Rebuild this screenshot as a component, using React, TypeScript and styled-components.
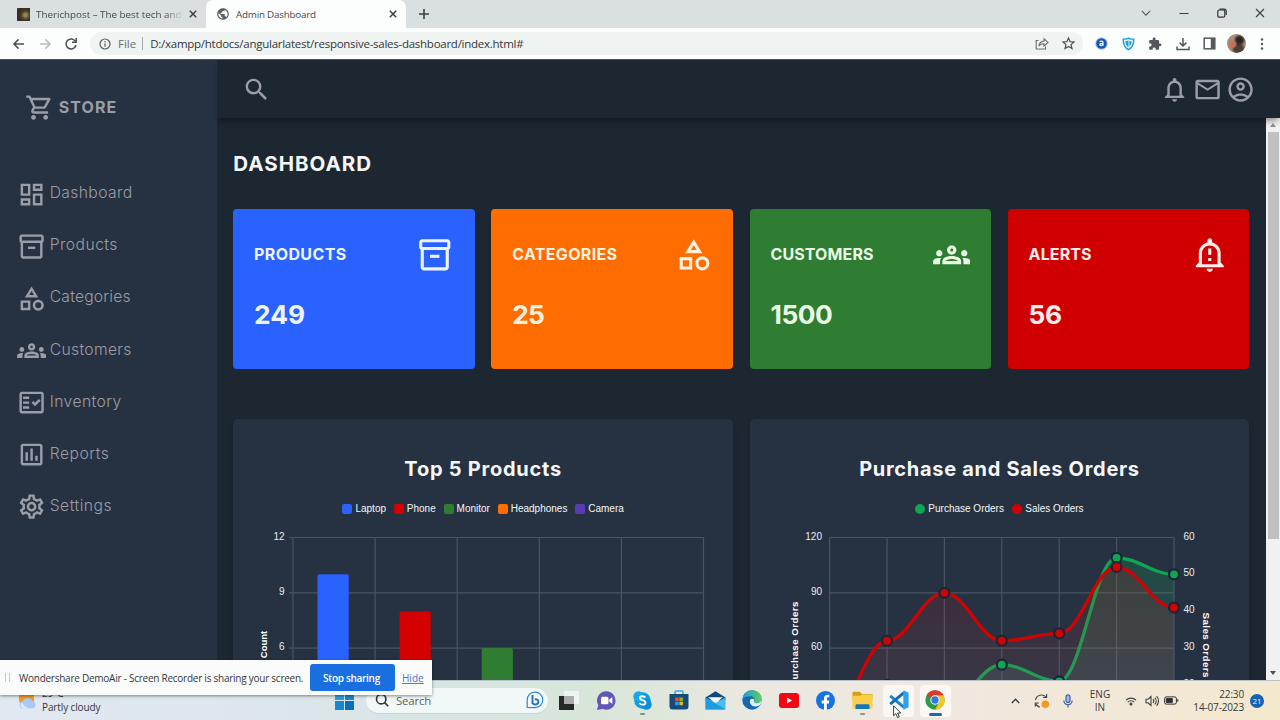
import React from "react";
import styled, { createGlobalStyle, css } from "styled-components";
import {
  MdOutlineShoppingCart,
  MdOutlineDashboard,
  MdOutlineInventory2,
  MdOutlineCategory,
  MdOutlineGroups,
  MdOutlineFactCheck,
  MdOutlinePoll,
  MdOutlineSettings,
  MdSearch,
  MdOutlineNotifications,
  MdOutlineEmail,
  MdOutlineAccountCircle,
  MdOutlineNotificationImportant,
  MdExtension,
  MdPublic,
} from "react-icons/md";

const GlobalStyle = createGlobalStyle`
  * { box-sizing: border-box; }
  body { margin: 0; overflow: hidden; background: #1d2731; }
  svg { display: block; flex: none; }
`;

const ui = `"Open Sans", "Noto Sans", sans-serif`;
const brand = `Inter, "Open Sans", sans-serif`;

const Screen = styled.div`
  position: relative;
  width: 1280px;
  height: 720px;
  display: flex;
  flex-direction: column;
  overflow: hidden;
`;

/* ---------- browser chrome ---------- */

const TabStrip = styled.div`
  height: 28px;
  flex: none;
  display: flex;
  align-items: center;
  background: #dadfe2;
  font-family: ${ui};
  font-size: 9.8px;
  color: #45494d;
`;

const Tab = styled.div<{ $active?: boolean; $width: number }>`
  width: ${(p) => p.$width}px;
  height: 28px;
  display: flex;
  align-items: center;
  gap: 6px;
  padding: 0 9px 0 ${(p) => (p.$active ? 10 : 17)}px;
  ${(p) =>
    p.$active &&
    css`
      background: #fcfdfd;
      border-radius: 7px 7px 0 0;
    `}
`;

const TabLabel = styled.span<{ $fade?: boolean; $spacing: number }>`
  flex: 1;
  overflow: hidden;
  white-space: nowrap;
  letter-spacing: ${(p) => p.$spacing}px;
  ${(p) =>
    p.$fade &&
    css`
      mask-image: linear-gradient(90deg, #000 88%, transparent);
    `}
`;

const Favicon = styled.span`
  width: 13px;
  height: 13px;
  flex: none;
  background: radial-gradient(circle at 65% 55%, #8c8a52 0 12%, #4a3a28 40%, #2f2a20 75%, #6b4b2c);
`;

const Avatar = styled.span`
  width: 19px;
  height: 19px;
  margin: 0 -3px;
  border-radius: 50%;
  background:
    radial-gradient(circle at 30% 55%, #c9705c 0 14%, transparent 26%),
    radial-gradient(circle at 66% 32%, #2a2523 0 16%, transparent 34%),
    radial-gradient(circle at 60% 78%, #4b4038 0 22%, transparent 38%), #a58d74;
`;

const NewTab = styled.div`
  padding-left: 12px;
`;

const WindowButtons = styled.div`
  margin-left: auto;
  padding-right: 15px;
  display: flex;
  align-items: center;
  gap: 28px;
  margin-top: -3px;
`;

const Toolbar = styled.div`
  height: 32px;
  flex: none;
  display: flex;
  align-items: center;
  background: #fcfdfd;
  padding: 0 12px;
  border-bottom: 1px solid #4b5460;
  font-family: ${ui};
`;

const NavButtons = styled.div`
  display: flex;
  align-items: center;
  gap: 12px;
  width: 78px;
`;

const Omnibox = styled.div`
  width: 993px;
  height: 23px;
  border-radius: 12px;
  background: #eff3f2;
  display: flex;
  align-items: center;
  padding: 0 8px 0 9px;
  font-size: 11.5px;
  color: #34383b;
`;

const Scheme = styled.span`
  margin-left: 7px;
  padding-right: 6px;
  margin-right: 7px;
  border-right: 1px solid #a5a9ab;
  line-height: 13px;
  color: #686c70;
`;

const Url = styled.span`
  flex: 1;
  white-space: nowrap;
  letter-spacing: -0.26px;
`;

const OmniActions = styled.div`
  display: flex;
  gap: 13px;
`;

const Extensions = styled.div`
  flex: 1;
  display: flex;
  align-items: center;
  justify-content: space-between;
  padding-left: 12px;
`;

/* ---------- dashboard page ---------- */

const Page = styled.div`
  height: 620px;
  flex: none;
  display: flex;
  background: #1d2731;
  font-family: ${brand};
`;

const Sidebar = styled.aside`
  width: 217px;
  flex: none;
  background: #263141;
  color: #9a9ea7;
`;

const Brand = styled.div`
  display: flex;
  align-items: center;
  gap: 5px;
  padding: 33px 0 0 24.5px;
  font-size: 16px;
  font-weight: 700;
  letter-spacing: 1.1px;
`;

const BrandName = styled.span`
  margin-top: -2px;
`;

const Menu = styled.nav`
  padding: 46px 0 0 16.5px;
`;

const MenuItem = styled.div`
  height: 52.1px;
  display: flex;
  align-items: center;
  gap: 4px;
  font-size: 15.7px;
  font-weight: 300;
`;

const MenuLabel = styled.span<{ $spacing: number }>`
  letter-spacing: ${(p) => p.$spacing}px;
  margin-top: -3px;
`;

const Content = styled.div`
  flex: 1;
  display: flex;
  flex-direction: column;
  min-width: 0;
`;

const Header = styled.header`
  height: 58px;
  flex: none;
  display: flex;
  align-items: center;
  justify-content: space-between;
  padding: 1px 25px 0 24.500px;
  color: #9a9ea7;
  background: #1d2731;
  box-shadow: 0 5px 6px -2px rgba(0, 0, 0, 0.4);
  z-index: 1;
`;

const HeaderIcons = styled.div`
  display: flex;
  gap: 3.6px;
`;

const Scroller = styled.div`
  flex: 1;
  min-height: 0;
  display: flex;
`;

const Main = styled.main`
  flex: 1;
  overflow: hidden;
  padding: 0 16.7px 0 16.3px;
  color: #f5f7f9;
`;

const Title = styled.h2`
  margin: 33.5px 0 33px;
  font-size: 20.5px;
  line-height: 24px;
  font-weight: 700;
  letter-spacing: 1px;
`;

const Cards = styled.section`
  display: grid;
  grid-template-columns: repeat(4, 1fr);
  gap: 16.7px;
`;

const Card = styled.article<{ $color: string; $ink: string }>`
  height: 160.5px;
  padding: 27px 20.8px 0 20.8px;
  border-radius: 4px;
  background: ${(p) => p.$color};
  color: ${(p) => p.$ink};
`;

const CardTop = styled.div`
  display: flex;
  align-items: center;
  justify-content: space-between;
`;

const CardName = styled.h3<{ $spacing: number }>`
  margin: 0;
  font-size: 16px;
  font-weight: 700;
  letter-spacing: ${(p) => p.$spacing}px;
`;

const CardValue = styled.div<{ $spacing: number }>`
  margin-top: 25.5px;
  font-size: 26.3px;
  line-height: 32px;
  font-weight: 700;
  letter-spacing: ${(p) => p.$spacing}px;
`;

const Charts = styled.section`
  margin-top: 50px;
  display: grid;
  grid-template-columns: repeat(2, 1fr);
  gap: 16.7px;
`;

const ChartCard = styled.article`
  height: 400px;
  border-radius: 5px;
  background: #263141;
  box-shadow: 0 4px 6px rgba(0, 0, 0, 0.12);
`;

const ChartTitle = styled.h2<{ $spacing: number }>`
  margin: 37px 0 0;
  text-align: center;
  font-size: 20px;
  line-height: 26px;
  font-weight: 700;
  letter-spacing: ${(p) => p.$spacing}px;
`;

const Legend = styled.div<{ $gap: number }>`
  margin-top: 20px;
  display: flex;
  justify-content: center;
  gap: ${(p) => p.$gap}px;
  font: 10px/14px "Liberation Sans", Arial, sans-serif;
  color: #f5f7fa;
`;

const LegendItem = styled.span`
  display: flex;
  align-items: center;
  gap: 3px;
`;

const Swatch = styled.i<{ $color: string; $round?: boolean }>`
  width: 10px;
  height: 10px;
  border-radius: ${(p) => (p.$round ? "50%" : "2px")};
  background: ${(p) => p.$color};
`;

const Plot = styled.svg`
  font-family: "Liberation Sans", Arial, sans-serif;
  font-size: 10px;
  fill: #e9edf2;
`;

const ScrollTrack = styled.div`
  width: 14px;
  display: flex;
  flex-direction: column;
  align-items: center;
  justify-content: space-between;
  background: #f1f1f2;
  padding: 5px 0;
`;

const ScrollThumb = styled.div`
  width: 11px;
  height: 407px;
  margin: 5px 0 auto;
  background: #bfc1c1;
`;

/* ---------- taskbar and sharing bar ---------- */

const Taskbar = styled.div`
  height: 40px;
  flex: none;
  display: flex;
  align-items: center;
  font-family: ${ui};
  color: #34383c;
  border-top: 1px solid #b9c2c8;
  background: linear-gradient(90deg, #e0e8f1 0%, #dbe6ea 25%, #d6e5e0 38%, #d8e6d8 47%, #e9e8e0 58%, #f0e8e0 72%, #f2e8d8 88%, #f4e8cd 100%);
`;

const Weather = styled.div`
  width: 335px;
  flex: none;
  padding: 0 0 1px 18px;
  display: flex;
  gap: 5px;
  align-items: center;
  font-size: 10px;
  line-height: 14px;
  letter-spacing: -0.12px;
`;

const SearchPill = styled.div`
  width: 182px;
  height: 26px;
  flex: none;
  margin: 0 3px 0 12px;
  border-radius: 13px;
  border-bottom: 1px solid #c9d2d2;
  background: #f1f8f7;
  display: flex;
  align-items: center;
  gap: 7px;
  padding: 0 4px 0 9px;
  font-size: 11.3px;
  color: #5a5f63;
`;

const SearchText = styled.span`
  flex: 1;
  letter-spacing: -0.1px;
`;

const Slot = styled.div<{ $lit?: boolean; $mark?: string; $wide?: boolean }>`
  width: 31px;
  height: 32px;
  flex: none;
  margin: 0 2.8px;
  display: flex;
  flex-direction: column;
  align-items: center;
  justify-content: center;
  border-radius: 4px;
  background: ${(p) => (p.$lit ? "rgba(255,255,255,.65)" : "transparent")};
  padding-top: 5px;

  &::after {
    content: "";
    width: ${(p) => (p.$wide ? 13 : 5)}px;
    height: 2.5px;
    margin-top: 3px;
    border-radius: 2px;
    background: ${(p) => p.$mark || "transparent"};
  }
`;

const Tray = styled.div`
  flex: 1;
  display: flex;
  align-items: center;
  justify-content: flex-end;
  padding-right: 16px;
  font-size: 10px;
  line-height: 13px;
`;

const TrayIcons = styled.div`
  display: flex;
  align-items: center;
  gap: 13.500px;
`;

const StatusIcons = styled.div`
  display: flex;
  align-items: center;
`;

const Lang = styled.div`
  width: 26px;
  margin: 0 12px 0 14px;
  text-align: center;
`;

const Clock = styled.div`
  width: 58px;
  margin: 0 6px 0 7px;
  text-align: right;
  white-space: nowrap;
  letter-spacing: -0.15px;
`;

const Count = styled.span`
  width: 14px;
  height: 14px;
  border-radius: 50%;
  background: #1265b4;
  color: #e8f2fb;
  font-size: 8px;
  line-height: 14px;
  text-align: center;
`;

const ShareBar = styled.div`
  position: absolute;
  left: 0;
  top: 660px;
  width: 432px;
  height: 35px;
  display: flex;
  align-items: center;
  background: #fafbfb;
  box-shadow: 0 1px 3px rgba(0, 0, 0, 0.45);
  font-family: ${ui};
  font-size: 10px;
  color: #34383c;
  white-space: nowrap;
`;

const Grip = styled.i`
  width: 5px;
  height: 9px;
  margin: 0 9px 0 5px;
  border: solid #c6c8ca;
  border-width: 0 1.5px;
`;

const ShareText = styled.span`
  width: 291px;
  letter-spacing: -0.25px;
`;

const StopButton = styled.button`
  width: 85px;
  height: 27px;
  padding: 0 2px 0 0;
  border: 0;
  border-radius: 3px;
  background: #1a6fe0;
  color: #fff;
  font: 600 10px ${ui};
  letter-spacing: -0.3px;
`;

const HideLink = styled.a`
  margin-left: 7px;
  color: #4d78cf;
  text-decoration: underline;
`;

const Cursor = styled.svg`
  position: absolute;
  left: 893px;
  top: 705px;
`;

/* ---------- drawings ---------- */

const Cross = ({ s = 8, w = 1.5, c = "#3c4043" }) => (
  <svg width={s} height={s} viewBox="0 0 8 8" stroke={c} strokeWidth={w}>
    <path d="M.8.8l6.4 6.4M7.2.8L.8 7.2" />
  </svg>
);

const Arrow = ({ color, flip }: { color: string; flip?: boolean }) => (
  <svg width="14" height="14" viewBox="0 0 14 14" fill="none" stroke={color} strokeWidth="1.5">
    <path d={flip ? "M2 7h10M7.4 2.4L12 7l-4.6 4.6" : "M12 7H2M6.6 2.4L2 7l4.6 4.6"} />
  </svg>
);

const menu: [string, React.ComponentType<{ size?: number }>, number][] = [
  ["Dashboard", MdOutlineDashboard, 0.36],
  ["Products", MdOutlineInventory2, 0.45],
  ["Categories", MdOutlineCategory, 0.2],
  ["Customers", MdOutlineGroups, 0.32],
  ["Inventory", MdOutlineFactCheck, 0.4],
  ["Reports", MdOutlinePoll, 0.5],
  ["Settings", MdOutlineSettings, 0.5],
];

const cards = [
  { name: "PRODUCTS", value: "249", color: "#2962ff", ink: "#eef4ff", Icon: MdOutlineInventory2, ns: 0.38, vs: 0 },
  { name: "CATEGORIES", value: "25", color: "#ff6d00", ink: "#fff1df", Icon: MdOutlineCategory, ns: 0.32, vs: -0.8 },
  { name: "CUSTOMERS", value: "1500", color: "#2e7d32", ink: "#e9fbe6", Icon: MdOutlineGroups, ns: 0.12, vs: -0.4 },
  { name: "ALERTS", value: "56", color: "#d00000", ink: "#ffeceb", Icon: MdOutlineNotificationImportant, ns: 0.12, vs: -0.4 },
];

const products: [string, string, number][] = [
  ["Laptop", "#2962ff", 10],
  ["Phone", "#d50000", 8],
  ["Monitor", "#2e7d32", 6],
  ["Headphones", "#ff6d00", 4],
  ["Camera", "#583cb3", 2],
];

const purchase = [31, 40, 28, 51, 42, 109, 100];
const sales = [11, 32, 45, 32, 34, 52, 41];

const GRID = "#4a5463";
const TOP = 21.5;
const STEP = 55.3;

function BarChart() {
  const left = 60;
  const col = 82.1;
  return (
    <Plot width="499" height="280" viewBox="0 0 499 280">
      <g stroke={GRID} strokeWidth="1.2">
        {[0, 1, 2, 3, 4].map((i) => (
          <line key={i} x1={left - 4} x2={left + col * 5} y1={TOP + i * STEP} y2={TOP + i * STEP} />
        ))}
        {[0, 1, 2, 3, 4, 5].map((i) => (
          <line key={i} x1={left + i * col} x2={left + i * col} y1={TOP} y2={TOP + 4 * STEP} />
        ))}
      </g>
      {products.map(([name, color, v], i) => (
        <rect key={name} x={left + i * col + 24.5} y={TOP + ((12 - v) * STEP) / 3} width="31.2" height={(v * STEP) / 3} rx="1.6" fill={color} />
      ))}
      {[12, 9, 6, 3, 0].map((v, i) => (
        <text key={v} x="51.5" y={TOP + i * STEP + 2} textAnchor="end">{v}</text>
      ))}
      <text transform="translate(33.5 128.5) rotate(-90)" textAnchor="middle" fontWeight="700" fontSize="9.5" fill="#fff">Count</text>
    </Plot>
  );
}

function OrdersChart() {
  const left = 79.6;
  const col = 57.4;
  const base = TOP + 4 * STEP;
  const px = (i: number) => left + i * col;
  const py = (v: number, max: number) => base - (v / max) * 4 * STEP;
  const curve = (data: number[], max: number) =>
    data
      .map((v, i) =>
        i === 0
          ? `M${px(0)} ${py(v, max)}`
          : `C${px(i - 1) + col * 0.38} ${py(data[i - 1], max)} ${px(i) - col * 0.38} ${py(v, max)} ${px(i)} ${py(v, max)}`
      )
      .join("");
  const series = [
    { id: "p", data: purchase, max: 120, color: "#0fa653", alpha: 0.22 },
    { id: "s", data: sales, max: 60, color: "#cf0303", alpha: 0.15 },
  ];
  return (
    <Plot width="499" height="280" viewBox="0 0 499 280">
      <defs>
        {series.map((s) => (
          <linearGradient key={s.id} id={`fill-${s.id}`} x1="0" x2="0" y1="0" y2="1">
            <stop offset="0" stopColor={s.color} stopOpacity={s.alpha} />
            <stop offset="1" stopColor="#8b929b" stopOpacity="0.13" />
          </linearGradient>
        ))}
      </defs>
      <g stroke={GRID} strokeWidth="1.2">
        {[0, 1, 2, 3, 4].map((i) => (
          <line key={i} x1={left} x2={px(6)} y1={TOP + i * STEP} y2={TOP + i * STEP} />
        ))}
        {[0, 1, 2, 3, 4, 5, 6].map((i) => (
          <line key={i} x1={px(i)} x2={px(i)} y1={TOP} y2={base} />
        ))}
      </g>
      {series.map((s) => (
        <g key={s.id}>
          <path d={`${curve(s.data, s.max)}L${px(6)} ${base}L${left} ${base}Z`} fill={`url(#fill-${s.id})`} />
          <path d={curve(s.data, s.max)} fill="none" stroke={s.color} strokeWidth="3.3" />
        </g>
      ))}
      {series.map((s) =>
        s.data.map((v, i) => <circle key={s.id + i} cx={px(i)} cy={py(v, s.max)} r="5" fill={s.color} stroke="#1b2635" strokeWidth="2.2" />)
      )}
      {[120, 90, 60, 30, 0].map((v, i) => (
        <text key={v} x="72" y={TOP + i * STEP + 2} textAnchor="end">{v}</text>
      ))}
      {[60, 50, 40, 30, 20, 10, 0].map((v, i) => (
        <text key={v} x="433.5" y={TOP + (i * 4 * STEP) / 6 + 2}>{v}</text>
      ))}
      <text transform="translate(48 128) rotate(-90)" textAnchor="middle" fontWeight="700" fontSize="9.8" fill="#fff" textLength="85">Purchase Orders</text>
      <text transform="translate(453 129) rotate(90)" textAnchor="middle" fontWeight="700" fontSize="9.8" fill="#fff" textLength="65">Sales Orders</text>
    </Plot>
  );
}

const WeatherIcon = () => (
  <svg width="19" height="19" viewBox="0 0 19 19">
    <rect x="1" y="0" width="15" height="13" rx="4" fill="#f29a2e" />
    <path d="M5 17.5a3.6 3.6 0 01.3-7.2 4.8 4.8 0 019-.2 3.8 3.8 0 01.4 7.4z" fill="#a9c8f2" />
    <path d="M5 17.5a3.2 3.2 0 01-.6-6 9 9 0 0012.9 4.500 3.700 3.700 0 01-2.600 1.500z" fill="#dbe9fb" />
  </svg>
);

const StartIcon = () => (
  <svg width="19" height="19" viewBox="0 0 19 19" fill="#1787d4">
    <path d="M0 0h9v9H0z" fill="#28a0e0" />
    <path d="M10 0h9v9h-9zM0 10h9v9H0z" />
    <path d="M10 10h9v9h-9z" fill="#0a6fc2" />
  </svg>
);

const BingIcon = () => (
  <svg width="18" height="18" viewBox="0 0 18 18" fill="none">
    <path d="M1.200 16.500V9A7.800 7.800 0 119 16.700z" stroke="#2c86cf" strokeWidth="1.200" />
    <path d="M6.500 4v8.500L9 13.600c2.200-.2 3.600-1.700 3.400-3.400-.2-1.500-2-2.200-3.600-1.800" stroke="#1f6fc9" strokeWidth="1.900" />
  </svg>
);

const TaskViewIcon = () => (
  <svg width="20" height="19" viewBox="0 0 20 19">
    <path d="M0 5h15v14H0z" fill="#26282a" />
    <path d="M5 0h15v13H5z" fill="#f4f6f4" opacity=".82" />
    <path d="M5 5h10v8H5z" fill="#a9acab" />
  </svg>
);

const ChatIcon = () => (
  <svg width="20" height="19" viewBox="0 0 20 19">
    <path d="M10.500.3a9.200 9.200 0 11-3.700 17.700L1 18.900l1.300-4.800A9.200 9.200 0 0110.500.3z" fill="#6257b5" />
    <rect x="5" y="5.800" width="7.500" height="7.500" rx="1.600" fill="#fff" />
    <path d="M13.200 8.600l3.200-2.300v6.600l-3.200-2.300z" fill="#fff" />
  </svg>
);

const SkypeIcon = () => (
  <svg width="19" height="19" viewBox="0 0 19 19">
    <circle cx="9.500" cy="9.500" r="8.300" fill="#0d9de0" />
    <circle cx="5.600" cy="5.600" r="5.300" fill="#19a8e6" />
    <circle cx="13.400" cy="13.400" r="5.300" fill="#0a8fd6" />
    <path d="M12.400 6.500C11.300 4.800 6.800 4.700 6.800 7c0 2.700 5.700 1.700 5.700 4.700 0 2.500-4.800 2.500-6 .4" fill="none" stroke="#fff" strokeWidth="1.900" />
  </svg>
);

const StoreIcon = () => (
  <svg width="20" height="20" viewBox="0 0 20 20">
    <path d="M6 4V2.200C6 1.500 6.400 1 7 1h6c.6 0 1 .5 1 1.200V4" fill="none" stroke="#3ba7dc" strokeWidth="1.500" />
    <path d="M.5 4h19v12.500a3 3 0 01-3 3h-13a3 3 0 01-3-3z" fill="#164b79" />
    <path d="M6.200 7.500h3.500V11H6.200z" fill="#e5532c" />
    <path d="M10.400 7.500h3.500V11h-3.500z" fill="#7db72f" />
    <path d="M6.200 11.700h3.500v3.500H6.200z" fill="#2d9fdf" />
    <path d="M10.400 11.700h3.500v3.500h-3.500z" fill="#f2b51f" />
  </svg>
);

const MailIcon = () => (
  <svg width="21" height="19" viewBox="0 0 21 19">
    <path d="M.5 6.500L10.500.3l10 6.200v3H.5z" fill="#12497f" />
    <path d="M3 6.300h15L10.500 12z" fill="#f4fafd" />
    <path d="M.5 6.500l10 5.500 10-5.500v12H.5z" fill="#45bdf0" />
    <path d="M.5 6.500l20 12H.5z" fill="#1f9be0" />
  </svg>
);

const EdgeIcon = () => (
  <svg width="20" height="20" viewBox="0 0 20 20">
    <defs>
      <linearGradient id="edge-top" x1="0" x2="1">
        <stop offset="0" stopColor="#2296d8" />
        <stop offset="1" stopColor="#5fd05b" />
      </linearGradient>
    </defs>
    <circle cx="10" cy="10" r="9.700" fill="#1467b3" />
    <path d="M.4 9.200C1.200 3.500 5.200.3 10.200.3c5.600 0 9.500 4 9.500 8 0 3.200-2.300 4.900-5 4.900-2.300 0-3.200-1-2.700-1.900 1.500-2.500-.3-5-3.600-5C4.500 6.300 1.600 8 .4 9.200z" fill="url(#edge-top)" />
    <path d="M8.300 9.500c-1.800 4 2 8 6.700 6.800 1.400-.4 2.500-.9 3.200-1.600 1-1.600 1.500-3.500 1.500-4.700-1.500 2.700-3.500 3.200-5 3.200-2.300 0-3.200-1-2.700-1.900.9-1.500-.9-3.500-3.700-1.800z" fill="#dff1f5" />
  </svg>
);

const YoutubeIcon = () => (
  <svg width="20" height="15" viewBox="0 0 20 15">
    <rect width="20" height="15" rx="3" fill="#f40612" />
    <path d="M8 4.500l5 3-5 3z" fill="#fff" />
  </svg>
);

const FacebookIcon = () => (
  <svg width="19" height="19" viewBox="0 0 19 19">
    <circle cx="9.500" cy="9.500" r="9.500" fill="#1673e6" />
    <path d="M8 19v-6.600H5.700V9.600H8V7.500c0-2.500 1.500-3.700 3.600-3.700.9 0 1.700.1 1.700.1v2.400h-1.100c-1.100 0-1.400.6-1.400 1.300v2h2.500l-.4 2.800h-2.100V19z" fill="#fff" />
  </svg>
);

const FolderIcon = () => (
  <svg width="21" height="19" viewBox="0 0 21 19">
    <path d="M.5 2c0-.8.5-1.300 1.300-1.300h6L10 3h9.200c.8 0 1.300.5 1.300 1.300V9H.5z" fill="#d99f14" />
    <path d="M.5 4.800h8L10 3.600h10.500v12.900c0 .8-.5 1.300-1.300 1.300H1.800c-.8 0-1.300-.5-1.300-1.300z" fill="#fcce45" />
    <path d="M3.500 18v-3.200c0-1 .6-1.600 1.600-1.600h10.800c1 0 1.600.6 1.600 1.600V18z" fill="#1474bd" />
  </svg>
);

const CodeIcon = () => (
  <svg width="20" height="20" viewBox="0 0 20 20">
    <path d="M1.200 5.900L15 17.300" stroke="#1a85cd" strokeWidth="3" />
    <path d="M1.200 14.100L15 2.700" stroke="#0f6fb5" strokeWidth="3" />
    <path d="M14.300.2L19.600 2.700v14.600l-5.300 2.500z" fill="#2aa3ea" />
  </svg>
);

const ChromeIcon = () => (
  <svg width="20" height="20" viewBox="0 0 20 20">
    <circle cx="10" cy="10" r="9.700" fill="#2d9b4c" />
    <path d="M10 10L1.600 5.150A9.700 9.700 0 0118.400 5.150z" fill="#dc3b30" />
    <path d="M10 10L18.400 5.150A9.700 9.700 0 0110 19.700L14 12.300z" fill="#f8c71d" />
    <path d="M10 5.150h8.400L13 12z" fill="#f8c71d" />
    <path d="M18.400 5.150H10V3h7z" fill="#dc3b30" />
    <circle cx="10" cy="10" r="4.700" fill="#fff" />
    <circle cx="10" cy="10" r="3.700" fill="#3178e2" />
  </svg>
);

const tasks = [
  { Icon: TaskViewIcon },
  { Icon: ChatIcon },
  { Icon: SkypeIcon, mark: "#84918a" },
  { Icon: StoreIcon },
  { Icon: MailIcon },
  { Icon: EdgeIcon },
  { Icon: YoutubeIcon },
  { Icon: FacebookIcon },
  { Icon: FolderIcon, mark: "#96918b" },
  { Icon: CodeIcon, lit: true },
  { Icon: ChromeIcon, lit: true, mark: "#1569b8", wide: true },
];

function BrowserChrome() {
  return (
    <>
      <TabStrip>
        <Tab $width={206}>
          <Favicon />
          <TabLabel $fade $spacing={0}>Therichpost – The best tech and c</TabLabel>
          <Cross />
        </Tab>
        <Tab $width={200} $active>
          <MdPublic size={14} color="#5a5f63" />
          <TabLabel $spacing={-0.2}>Admin Dashboard</TabLabel>
          <Cross />
        </Tab>
        <NewTab>
          <svg width="12" height="12" viewBox="0 0 12 12" stroke="#3c4043" strokeWidth="1.600">
            <path d="M6 1v10M1 6h10" />
          </svg>
        </NewTab>
        <WindowButtons>
          <svg width="10" height="10" viewBox="0 0 10 10" fill="none" stroke="#53585c" strokeWidth="1.100">
            <path d="M.8 2.800L5 7.200l4.200-4.400" />
          </svg>
          <svg width="10" height="10" viewBox="0 0 10 10" stroke="#3c4043">
            <path d="M.5 5.500h9" />
          </svg>
          <svg width="10" height="10" viewBox="0 0 10 10" fill="none" stroke="#2e3235" strokeWidth="1.200">
            <rect x=".8" y="2" width="7" height="7.200" rx="1.500" />
            <path d="M2.500 1.200h4.800c1.200 0 1.900.7 1.900 1.900v4" />
          </svg>
          <Cross s={10} w={0.9} />
        </WindowButtons>
      </TabStrip>
      <Toolbar>
        <NavButtons>
          <Arrow color="#4c5054" />
          <Arrow color="#b9bcbe" flip />
          <svg width="14" height="14" viewBox="0 0 14 14" fill="none" stroke="#4c5054" strokeWidth="1.500">
            <path d="M12 8a5 5 0 11-1.300-4.600L12 4.800" />
            <path d="M12.200 1v4.200H8" />
          </svg>
        </NavButtons>
        <Omnibox>
          <svg width="12" height="12" viewBox="0 0 12 12" fill="none" stroke="#5a5f63" strokeWidth="1.200">
            <circle cx="6" cy="6" r="5" />
            <path d="M6 5.200v3.500M6 3v1.300" />
          </svg>
          <Scheme>File</Scheme>
          <Url>D:/xampp/htdocs/angularlatest/responsive-sales-dashboard/index.html#</Url>
          <OmniActions>
            <svg width="14" height="13" viewBox="0 0 14 13" fill="none" stroke="#6a6e72" strokeWidth="1.100">
              <path d="M3.500 3.500H1.200V12h9.300v-2.500" />
              <path d="M4 9c.3-3.200 2-4.800 5-4.900V1.800L13 5.400 9 9V6.800C6.500 6.700 5 7.400 4 9z" />
            </svg>
            <svg width="13" height="13" viewBox="0 0 13 13" fill="none" stroke="#4c5054" strokeWidth="1.200">
              <path d="M6.500 1l1.600 3.700 4 .3-3.100 2.600 1 3.900-3.500-2.100L3 11.500l1-3.900L.9 5l4-.3z" />
            </svg>
          </OmniActions>
        </Omnibox>
        <Extensions>
          <svg width="13" height="13" viewBox="0 0 13 13" fill="none">
            <circle cx="6.500" cy="6.500" r="6.300" fill="#a9cdf5" />
            <circle cx="6.500" cy="6.500" r="5.300" fill="#1455b5" />
            <path d="M4.600 4.700c1-1 3.400-.9 3.400.6v3.500M8 6.300C5.800 6.200 4.700 6.700 4.800 7.700c.2 1.300 2.400 1.200 3.200-.2" stroke="#fff" strokeWidth="1.200" />
          </svg>
          <svg width="13" height="14" viewBox="0 0 13 14">
            <path d="M.5 1.500C4 1.500 5 1 6.500.5 8 1 9 1.500 12.500 1.500c0 6-1.500 9.500-6 12C2 11 .5 7.500.5 1.500z" fill="#1d9fd8" />
            <path d="M2 2.800c2.300 0 3.300-.3 4.500-.8 1.200.5 2.200.8 4.500.8-.1 4.500-1.300 7-4.500 9C3.300 9.800 2.100 7.300 2 2.800z" fill="#d9f2fb" />
            <path d="M3.500 3.900c1.300 0 2-.1 3-.5v6.900c-2-1.500-2.900-3.300-3-6.400z" fill="#1d9fd8" />
            <path d="M7.500 4.200l2 .2c-.2 2-.8 3.300-2 4.600z" fill="#1486c4" />
          </svg>
          <MdExtension size={14} color="#54585c" />
          <svg width="14" height="14" viewBox="0 0 14 14" fill="none" stroke="#54585c" strokeWidth="1.500">
            <path d="M7 1v7.800M3.600 5.600L7 9l3.400-3.400M1 9.500v3h12v-3" />
          </svg>
          <svg width="13" height="13" viewBox="0 0 13 13">
            <rect x="1.200" y="1.200" width="10.600" height="10.600" fill="none" stroke="#54585c" strokeWidth="1.500" />
            <path d="M7.800 1.200h4v10.600h-4z" fill="#54585c" />
          </svg>
          <Avatar />
          <svg width="12" height="14" viewBox="0 0 12 14" fill="#54585c">
            <circle cx="6" cy="2.500" r="1.200" />
            <circle cx="6" cy="7" r="1.200" />
            <circle cx="6" cy="11.500" r="1.200" />
          </svg>
        </Extensions>
      </Toolbar>
    </>
  );
}

function Dashboard() {
  return (
    <Page>
      <Sidebar>
        <Brand>
          <MdOutlineShoppingCart size={29.2} />
          <BrandName>STORE</BrandName>
        </Brand>
        <Menu>
          {menu.map(([label, Icon, spacing]) => (
            <MenuItem key={label}>
              <Icon size={29.2} />
              <MenuLabel $spacing={spacing}>{label}</MenuLabel>
            </MenuItem>
          ))}
        </Menu>
      </Sidebar>
      <Content>
        <Header>
          <MdSearch size={29.2} />
          <HeaderIcons>
            <MdOutlineNotifications size={29.2} />
            <MdOutlineEmail size={29.2} />
            <MdOutlineAccountCircle size={29.2} />
          </HeaderIcons>
        </Header>
        <Scroller>
          <Main>
            <Title>DASHBOARD</Title>
            <Cards>
              {cards.map(({ name, value, color, ink, Icon, ns, vs }) => (
                <Card key={name} $color={color} $ink={ink}>
                  <CardTop>
                    <CardName $spacing={ns}>{name}</CardName>
                    <Icon size={37.5} />
                  </CardTop>
                  <CardValue $spacing={vs}>{value}</CardValue>
                </Card>
              ))}
            </Cards>
            <Charts>
              <ChartCard>
                <ChartTitle $spacing={0.75}>Top 5 Products</ChartTitle>
                <Legend $gap={7.8}>
                  {products.map(([name, color]) => (
                    <LegendItem key={name}>
                      <Swatch $color={color} />
                      {name}
                    </LegendItem>
                  ))}
                </Legend>
                <BarChart />
              </ChartCard>
              <ChartCard>
                <ChartTitle $spacing={0.7}>Purchase and Sales Orders</ChartTitle>
                <Legend $gap={8.3}>
                  <LegendItem>
                    <Swatch $color="#0fa653" $round />
                    Purchase Orders
                  </LegendItem>
                  <LegendItem>
                    <Swatch $color="#cf0303" $round />
                    Sales Orders
                  </LegendItem>
                </Legend>
                <OrdersChart />
              </ChartCard>
            </Charts>
          </Main>
          <ScrollTrack>
            <svg width="6" height="4" viewBox="0 0 6 4" fill="#8c8f91"><path d="M0 4l3-4 3 4z" /></svg>
            <ScrollThumb />
            <svg width="6" height="4" viewBox="0 0 6 4" fill="#4f5254"><path d="M0 0l3 4 3-4z" /></svg>
          </ScrollTrack>
        </Scroller>
      </Content>
    </Page>
  );
}

function DesktopTaskbar() {
  return (
    <Taskbar>
      <Weather>
        <WeatherIcon />
        <div>
          <div>29°C</div>
          <div>Partly cloudy</div>
        </div>
      </Weather>
      <StartIcon />
      <SearchPill>
        <svg width="14" height="14" viewBox="0 0 14 14" fill="none" stroke="#2c3033" strokeWidth="1.600">
          <circle cx="6.200" cy="6.200" r="4.700" />
          <path d="M9.600 9.600l3.600 3.600" />
        </svg>
        <SearchText>Search</SearchText>
        <BingIcon />
      </SearchPill>
      {tasks.map(({ Icon, lit, mark, wide }, i) => (
        <Slot key={i} $lit={lit} $mark={mark} $wide={wide}>
          <Icon />
        </Slot>
      ))}
      <Tray>
        <TrayIcons>
          <svg width="9" height="8" viewBox="0 0 9 8" fill="none" stroke="#34383c" strokeWidth="1.300">
            <path d="M.8 6L4.500 2.200 8.200 6" />
          </svg>
          <svg width="16" height="16" viewBox="0 0 16 16" fill="none" stroke="#4a4e52" strokeWidth="1.200">
            <path d="M1.500 7A6 6 0 0112 4.200M12.600 1v3.500H9M1.500 10.200A6 6 0 006 14M1.300 13.500V10h3.500" />
            <circle cx="11.300" cy="11.300" r="3.800" fill="#f59a1c" stroke="none" />
          </svg>
          <svg width="10" height="14" viewBox="0 0 10 14" fill="none" stroke="#3f64ad" strokeWidth="1.200">
            <rect x="3" y=".8" width="4" height="7.600" rx="2" fill="#9db8e6" />
            <path d="M.8 6.500a4.200 4.200 0 008.400 0M5 10.700v2.700" />
          </svg>
        </TrayIcons>
        <Lang>ENG<br />IN</Lang>
        <StatusIcons>
          <svg width="12" height="10" viewBox="0 0 12 10" fill="none" stroke="#3c4043" strokeWidth="1.100">
            <path d="M1 4.200a7 7 0 0110 0M2.800 6.100a4.500 4.500 0 016.400 0" />
            <circle cx="6" cy="8" r="1" fill="#3c4043" />
          </svg>
          <svg width="27" height="12" viewBox="-8 0 27 12" fill="none" stroke="#3c4043" strokeWidth="1.100">
            <path d="M1 4.200h2L6 1.500v9L3 7.800H1zM8 4.200a2.600 2.600 0 010 3.600M9.800 2.700a4.700 4.700 0 010 6.600M11.600 1.200a7 7 0 010 9.600" />
          </svg>
          <svg width="15" height="9" viewBox="0 0 15 9" fill="none" stroke="#2c3033">
            <rect x=".6" y=".9" width="11.800" height="7.200" rx="1.700" />
            <path d="M2.300 2.600h6v3.800h-6z" fill="#2c3033" />
            <path d="M13.800 3.200v2.600" />
          </svg>
        </StatusIcons>
        <Clock>22:30<br />14-07-2023</Clock>
        <Count>21</Count>
      </Tray>
    </Taskbar>
  );
}

export default function App() {
  return (
    <Screen>
      <GlobalStyle />
      <BrowserChrome />
      <Dashboard />
      <DesktopTaskbar />
      <ShareBar>
        <Grip />
        <ShareText>Wondershare DemoAir - Screen Recorder is sharing your screen.</ShareText>
        <StopButton>Stop sharing</StopButton>
        <HideLink>Hide</HideLink>
      </ShareBar>
      <Cursor width="9" height="14" viewBox="0 0 9 14">
        <path d="M.6.8v10l2.300-2.200 1.700 4 1.700-.8-1.700-3.800h3.200z" fill="#fff" stroke="#26292c" strokeWidth=".9" />
      </Cursor>
    </Screen>
  );
}
